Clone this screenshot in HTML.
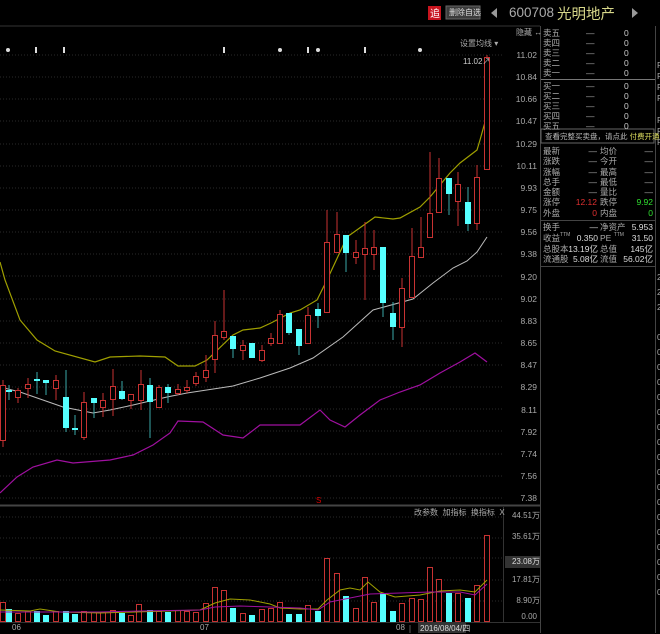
<!DOCTYPE html>
<html><head><meta charset="utf-8"><style>
body{margin:0;width:660px;height:633px;background:#000;overflow:hidden;position:relative;font-family:"Liberation Sans","Noto Sans CJK SC",sans-serif;color:#bbb}
.a{position:absolute;white-space:nowrap}
.p{font-size:8.5px;line-height:10px}
.l{color:#aaa}
sup{font-size:5px;vertical-align:top;line-height:5px}
</style></head><body>
<svg class="a" style="left:0;top:0" width="660" height="633">
<line x1="0" y1="26" x2="540" y2="26" stroke="#333"/>
<line x1="540.5" y1="26" x2="540.5" y2="633" stroke="#444"/>
<line x1="655.5" y1="26" x2="655.5" y2="633" stroke="#444"/>
<line x1="0" y1="505.5" x2="540" y2="505.5" stroke="#444" stroke-width="2"/>
<line x1="0" y1="622.5" x2="540" y2="622.5" stroke="#333"/>
<line x1="503.5" y1="507" x2="503.5" y2="622" stroke="#333"/>
<g stroke="#2a2a2a" stroke-dasharray="1,2">
<line x1="0" y1="55" x2="503" y2="55"/><line x1="0" y1="77" x2="503" y2="77"/><line x1="0" y1="99" x2="503" y2="99"/><line x1="0" y1="121" x2="503" y2="121"/><line x1="0" y1="144" x2="503" y2="144"/><line x1="0" y1="166" x2="503" y2="166"/><line x1="0" y1="188" x2="503" y2="188"/><line x1="0" y1="210" x2="503" y2="210"/><line x1="0" y1="232" x2="503" y2="232"/><line x1="0" y1="254" x2="503" y2="254"/><line x1="0" y1="276" x2="503" y2="276"/><line x1="0" y1="299" x2="503" y2="299"/><line x1="0" y1="321" x2="503" y2="321"/><line x1="0" y1="343" x2="503" y2="343"/><line x1="0" y1="365" x2="503" y2="365"/><line x1="0" y1="387" x2="503" y2="387"/><line x1="0" y1="409" x2="503" y2="409"/><line x1="0" y1="431" x2="503" y2="431"/><line x1="0" y1="454" x2="503" y2="454"/><line x1="0" y1="476" x2="503" y2="476"/><line x1="0" y1="498" x2="503" y2="498"/>
<line x1="0" y1="517" x2="503" y2="517"/><line x1="0" y1="538" x2="503" y2="538"/><line x1="0" y1="558" x2="503" y2="558"/><line x1="0" y1="580" x2="503" y2="580"/><line x1="0" y1="601" x2="503" y2="601"/>
</g>
<polyline fill="none" stroke="#a0a000" stroke-width="1.2" points="0,262 5,280 20,320 37,340 55,351 95,362 110,357 140,356 165,357 178,366 195,366 207,360 233,335 243,330 260,328 271,323 290,313 300,310 317,300 327,280 347,237 375,217 393,219 400,218 420,207 430,197 450,173 460,163 477,150 480,140 487,115"/>
<polyline fill="none" stroke="#bbb" stroke-width="1" points="0,387 20,392 63,407 93,413 110,410 133,405 167,397 187,393 233,386 260,378 290,368 313,358 343,337 373,310 413,299 433,283 453,268 467,261 477,252 487,237"/>
<polyline fill="none" stroke="#a010a0" stroke-width="1.2" points="0,493 17,477 33,467 57,460 73,463 110,460 133,455 153,445 170,433 178,421 203,422 223,435 243,438 260,425 280,425 300,425 320,410 330,420 345,427 360,415 380,400 400,392 420,385 440,373 460,362 475,353 487,362"/>
<g stroke="#c83232" fill="#000">
<line x1="3" y1="380" x2="3" y2="447"/><rect x="0.5" y="385.5" width="5" height="55"/>
<line x1="18" y1="388" x2="18" y2="403"/><rect x="15.5" y="390.5" width="5" height="7"/>
<line x1="28" y1="378" x2="28" y2="398"/><rect x="25.5" y="384.5" width="5" height="4"/>
<line x1="56" y1="375" x2="56" y2="400"/><rect x="53.5" y="380.5" width="5" height="8"/>
<line x1="84" y1="392" x2="84" y2="440"/><rect x="81.5" y="402.5" width="5" height="35"/>
<line x1="103" y1="393" x2="103" y2="417"/><rect x="100.5" y="400.5" width="5" height="7"/>
<line x1="113" y1="369" x2="113" y2="416"/><rect x="110.5" y="386.5" width="5" height="13"/>
<line x1="131" y1="394" x2="131" y2="409"/><rect x="128.5" y="394.5" width="5" height="6"/>
<line x1="141" y1="370" x2="141" y2="410"/><rect x="138.5" y="384.5" width="5" height="16"/>
<line x1="159" y1="385" x2="159" y2="407"/><rect x="156.5" y="387.5" width="5" height="20"/>
<line x1="178" y1="384" x2="178" y2="395"/><rect x="175.5" y="389.5" width="5" height="4"/>
<line x1="187" y1="380" x2="187" y2="393"/><rect x="184.5" y="387.5" width="5" height="3"/>
<line x1="196" y1="372" x2="196" y2="386"/><rect x="193.5" y="376.5" width="5" height="7"/>
<line x1="206" y1="355" x2="206" y2="382"/><rect x="203.5" y="370.5" width="5" height="7"/>
<line x1="215" y1="321" x2="215" y2="373"/><rect x="212.5" y="335.5" width="5" height="24"/>
<line x1="224" y1="290" x2="224" y2="340"/><rect x="221.5" y="331.5" width="5" height="6"/>
<line x1="243" y1="340" x2="243" y2="360"/><rect x="240.5" y="345.5" width="5" height="5"/>
<line x1="262" y1="345" x2="262" y2="362"/><rect x="259.5" y="350.5" width="5" height="10"/>
<line x1="271" y1="333" x2="271" y2="346"/><rect x="268.5" y="338.5" width="5" height="5"/>
<line x1="280" y1="310" x2="280" y2="343"/><rect x="277.5" y="314.5" width="5" height="29"/>
<line x1="308" y1="307" x2="308" y2="343"/><rect x="305.5" y="315.5" width="5" height="28"/>
<line x1="327" y1="210" x2="327" y2="312"/><rect x="324.5" y="242.5" width="5" height="70"/>
<line x1="337" y1="212" x2="337" y2="252"/><rect x="334.5" y="234.5" width="5" height="18"/>
<line x1="356" y1="240" x2="356" y2="264"/><rect x="353.5" y="252.5" width="5" height="5"/>
<line x1="365" y1="222" x2="365" y2="300"/><rect x="362.5" y="248.5" width="5" height="6"/>
<line x1="374" y1="230" x2="374" y2="270"/><rect x="371.5" y="247.5" width="5" height="7"/>
<line x1="402" y1="278" x2="402" y2="347"/><rect x="399.5" y="288.5" width="5" height="39"/>
<line x1="412" y1="228" x2="412" y2="297"/><rect x="409.5" y="256.5" width="5" height="41"/>
<line x1="421" y1="217" x2="421" y2="257"/><rect x="418.5" y="247.5" width="5" height="10"/>
<line x1="430" y1="152" x2="430" y2="237"/><rect x="427.5" y="213.5" width="5" height="24"/>
<line x1="439" y1="158" x2="439" y2="212"/><rect x="436.5" y="178.5" width="5" height="34"/>
<line x1="458" y1="172" x2="458" y2="226"/><rect x="455.5" y="184.5" width="5" height="17"/>
<line x1="477" y1="165" x2="477" y2="230"/><rect x="474.5" y="177.5" width="5" height="46"/>
<line x1="487" y1="55" x2="487" y2="169"/><rect x="484.5" y="57.5" width="5" height="112"/>
</g>
<g stroke="#3aa8a8" fill="#55ffff">
<line x1="9" y1="385" x2="9" y2="400"/><rect x="6" y="390" width="6" height="2" stroke="none"/>
<line x1="37" y1="372" x2="37" y2="394"/><rect x="34" y="379" width="6" height="2" stroke="none"/>
<line x1="46" y1="380" x2="46" y2="395"/><rect x="43" y="380" width="6" height="3" stroke="none"/>
<line x1="66" y1="370" x2="66" y2="432"/><rect x="63" y="397" width="6" height="31" stroke="none"/>
<line x1="75" y1="415" x2="75" y2="435"/><rect x="72" y="428" width="6" height="2" stroke="none"/>
<line x1="94" y1="398" x2="94" y2="418"/><rect x="91" y="398" width="6" height="5" stroke="none"/>
<line x1="122" y1="381" x2="122" y2="400"/><rect x="119" y="391" width="6" height="8" stroke="none"/>
<line x1="150" y1="378" x2="150" y2="438"/><rect x="147" y="385" width="6" height="17" stroke="none"/>
<line x1="168" y1="384" x2="168" y2="403"/><rect x="165" y="387" width="6" height="6" stroke="none"/>
<line x1="233" y1="336" x2="233" y2="358"/><rect x="230" y="336" width="6" height="13" stroke="none"/>
<line x1="252" y1="343" x2="252" y2="358"/><rect x="249" y="343" width="6" height="15" stroke="none"/>
<line x1="289" y1="313" x2="289" y2="335"/><rect x="286" y="313" width="6" height="20" stroke="none"/>
<line x1="299" y1="329" x2="299" y2="355"/><rect x="296" y="329" width="6" height="17" stroke="none"/>
<line x1="318" y1="303" x2="318" y2="328"/><rect x="315" y="309" width="6" height="7" stroke="none"/>
<line x1="346" y1="235" x2="346" y2="272"/><rect x="343" y="235" width="6" height="18" stroke="none"/>
<line x1="383" y1="247" x2="383" y2="317"/><rect x="380" y="247" width="6" height="56" stroke="none"/>
<line x1="393" y1="302" x2="393" y2="340"/><rect x="390" y="313" width="6" height="14" stroke="none"/>
<line x1="449" y1="178" x2="449" y2="215"/><rect x="446" y="178" width="6" height="16" stroke="none"/>
<line x1="468" y1="187" x2="468" y2="231"/><rect x="465" y="202" width="6" height="22" stroke="none"/>
</g>
<g fill="#ddd"><circle cx="8" cy="50" r="2"/><rect x="35" y="47" width="2" height="6"/><rect x="63" y="47" width="2" height="6"/><rect x="223" y="47" width="2" height="6"/><circle cx="280" cy="50" r="2"/><rect x="307" y="47" width="2" height="6"/><circle cx="318" cy="50" r="2"/><rect x="364" y="47" width="2" height="6"/><circle cx="420" cy="50" r="2"/></g>
<g stroke="#c83232" fill="#000">
<rect x="0.5" y="602.5" width="5" height="19"/><rect x="15.5" y="613.5" width="5" height="8"/><rect x="25.5" y="611.5" width="5" height="10"/><rect x="53.5" y="611.5" width="5" height="10"/><rect x="81.5" y="611.5" width="5" height="10"/><rect x="91.5" y="612.5" width="5" height="9"/><rect x="100.5" y="612.5" width="5" height="9"/><rect x="110.5" y="610.5" width="5" height="11"/><rect x="128.5" y="615.5" width="5" height="6"/><rect x="136.5" y="604.5" width="5" height="17"/><rect x="156.5" y="611.5" width="5" height="10"/><rect x="175.5" y="610.5" width="5" height="11"/><rect x="184.5" y="611.5" width="5" height="10"/><rect x="193.5" y="612.5" width="5" height="9"/><rect x="203.5" y="603.5" width="5" height="18"/><rect x="212.5" y="587.5" width="5" height="34"/><rect x="221.5" y="590.5" width="5" height="31"/><rect x="240.5" y="613.5" width="5" height="8"/><rect x="259.5" y="609.5" width="5" height="12"/><rect x="268.5" y="608.5" width="5" height="13"/><rect x="277.5" y="602.5" width="5" height="19"/><rect x="305.5" y="605.5" width="5" height="16"/><rect x="324.5" y="558.5" width="5" height="63"/><rect x="334.5" y="573.5" width="5" height="48"/><rect x="353.5" y="608.5" width="5" height="13"/><rect x="362.5" y="577.5" width="5" height="44"/><rect x="371.5" y="602.5" width="5" height="19"/><rect x="399.5" y="603.5" width="5" height="18"/><rect x="409.5" y="598.5" width="5" height="23"/><rect x="418.5" y="599.5" width="5" height="22"/><rect x="427.5" y="567.5" width="5" height="54"/><rect x="436.5" y="579.5" width="5" height="42"/><rect x="455.5" y="593.5" width="5" height="28"/><rect x="474.5" y="585.5" width="5" height="36"/><rect x="484.5" y="535.5" width="5" height="86"/>
</g>
<g fill="#55ffff">
<rect x="6" y="609" width="6" height="13"/><rect x="34" y="611" width="6" height="11"/><rect x="43" y="615" width="6" height="7"/><rect x="63" y="611" width="6" height="11"/><rect x="72" y="614" width="6" height="8"/><rect x="119" y="613" width="6" height="9"/><rect x="147" y="610" width="6" height="12"/><rect x="165" y="612" width="6" height="10"/><rect x="230" y="608" width="6" height="14"/><rect x="249" y="615" width="6" height="7"/><rect x="286" y="614" width="6" height="8"/><rect x="296" y="614" width="6" height="8"/><rect x="315" y="611" width="6" height="11"/><rect x="343" y="596" width="6" height="26"/><rect x="380" y="593" width="6" height="29"/><rect x="390" y="611" width="6" height="11"/><rect x="446" y="593" width="6" height="29"/><rect x="465" y="598" width="6" height="24"/>
</g>
<polyline fill="none" stroke="#a0a000" points="0,610 30,611 40,609 60,612 100,613 200,610 215,603 230,599 250,600 270,604 280,608 300,609 318,609 327,600 340,590 350,588 360,590 368,582 380,592 395,597 420,595 440,591 460,590 475,592 487,580"/>
<polyline fill="none" stroke="#a010a0" points="0,612 60,612 100,612 140,611 200,610 215,607 240,606 270,607 300,608 318,610 330,602 350,598 370,594 400,593 430,592 460,592 475,595 487,584"/>
<rect x="428" y="6" width="13" height="14" fill="#c8141e"/>
<rect x="446" y="6" width="34" height="13" fill="#3c3c3c" stroke="#666"/>
<path d="M497 8 L491 13 L497 18Z" fill="#999"/><path d="M632 8 L638 13 L632 18Z" fill="#999"/>
<rect x="505" y="556" width="35" height="12" fill="#333"/>
<rect x="418" y="623" width="48" height="10" fill="#333"/>
<rect x="541" y="129" width="113" height="14" fill="none" stroke="#666"/>
<line x1="541" y1="79.5" x2="655" y2="79.5" stroke="#777"/>
<line x1="541" y1="220.5" x2="655" y2="220.5" stroke="#444"/>
<line x1="541" y1="266.5" x2="655" y2="266.5" stroke="#444"/>
<line x1="410" y1="625" x2="410" y2="633" stroke="#555"/>
</svg>
<div class="a" style="left:430px;top:5px;font-size:10px;color:#fff">追</div>
<div class="a" style="left:449px;top:7px;font-size:8px;color:#ddd">删除自选</div>
<div class="a" style="left:509px;top:5px;font-size:13.5px;color:#aaa">600708</div>
<div class="a" style="left:557px;top:3px;font-size:14.5px;color:#d8d88a">光明地产</div>
<div class="a" style="left:516px;top:27px;font-size:8px;color:#aaa">隐藏 ↔</div>
<div class="a" style="left:460px;top:38px;font-size:8px;color:#aaa">设置均线 ▾</div>
<div class="a" style="left:463px;top:56px;font-size:8px;color:#ccc">11.02↗</div>
<div class="a" style="left:316px;top:496px;font-size:8px;color:#d00">S</div>
<div class="a" style="left:500px;top:44px;width:37px;text-align:right;font-size:8.5px;line-height:22.15px;color:#aaa;white-space:normal">11.02<br>10.84<br>10.66<br>10.47<br>10.29<br>10.11<br>9.93<br>9.75<br>9.56<br>9.38<br>9.20<br>9.02<br>8.83<br>8.65<br>8.47<br>8.29<br>8.11<br>7.92<br>7.74<br>7.56<br>7.38</div>
<div class="a" style="left:414px;top:507px;font-size:8px;color:#aaa">改参数 &nbsp;加指标 &nbsp;换指标 &nbsp;X</div>
<div class="a" style="left:505px;top:511px;width:35px;text-align:right;font-size:8px;line-height:10px;color:#aaa">44.51万</div>
<div class="a" style="left:505px;top:532px;width:35px;text-align:right;font-size:8px;line-height:10px;color:#aaa">35.61万</div>
<div class="a" style="left:505px;top:557px;width:35px;text-align:right;font-size:8px;line-height:10px;color:#ddd">23.08万</div>
<div class="a" style="left:505px;top:575px;width:35px;text-align:right;font-size:8px;line-height:10px;color:#aaa">17.81万</div>
<div class="a" style="left:505px;top:596px;width:35px;text-align:right;font-size:8px;line-height:10px;color:#aaa">8.90万</div>
<div class="a" style="left:505px;top:612px;width:32px;text-align:right;font-size:8px;line-height:10px;color:#aaa">0.00</div>
<div class="a" style="left:12px;top:623px;font-size:8px;color:#aaa">06</div>
<div class="a" style="left:200px;top:623px;font-size:8px;color:#aaa">07</div>
<div class="a" style="left:396px;top:623px;font-size:8px;color:#aaa">08</div>
<div class="a" style="left:420px;top:623px;font-size:8px;color:#ddd">2016/08/04/四</div>
<div class="a p l" style="left:543px;top:28px">卖五<br>卖四<br>卖三<br>卖二<br>卖一</div>
<div class="a p l" style="left:586px;top:28px">—<br>—<br>—<br>—<br>—</div>
<div class="a p" style="left:624px;top:28px;color:#ccc">0<br>0<br>0<br>0<br>0</div>
<div class="a p l" style="left:543px;top:81px">买一<br>买二<br>买三<br>买四<br>买五</div>
<div class="a p l" style="left:586px;top:81px">—<br>—<br>—<br>—<br>—</div>
<div class="a p" style="left:624px;top:81px;color:#ccc">0<br>0<br>0<br>0<br>0</div>
<div class="a" style="left:545px;top:131px;font-size:7.5px;color:#bbb">查看完整买卖盘，请点此 <span style="color:#e0e060">付费开通</span></div>
<div class="a p l" style="left:543px;top:146px;line-height:10.3px">最新<br>涨跌<br>涨幅<br>总手<br>金额<br>涨停<br>外盘</div>
<div class="a p l" style="left:568px;top:146px;line-height:10.3px;width:29px;text-align:right">—<br>—<br>—<br>—<br>—<br><span style="color:#e03030">12.12</span><br><span style="color:#e03030">0</span></div>
<div class="a p l" style="left:600px;top:146px;line-height:10.3px">均价<br>今开<br>最高<br>最低<br>量比<br>跌停<br>内盘</div>
<div class="a p l" style="left:628px;top:146px;line-height:10.3px;width:25px;text-align:right">—<br>—<br>—<br>—<br>—<br><span style="color:#30e030">9.92</span><br><span style="color:#30e030">0</span></div>
<div class="a p l" style="left:543px;top:222px;line-height:10.8px">换手<br>收益<sup>TTM</sup><br>总股本<br>流通股</div>
<div class="a p" style="left:567px;top:222px;line-height:10.8px;width:31px;text-align:right;color:#ddd">—<br>0.350<br>13.19亿<br>5.08亿</div>
<div class="a p l" style="left:600px;top:222px;line-height:10.8px">净资产<br>PE <sup>TTM</sup><br>总值<br>流值</div>
<div class="a p" style="left:620px;top:222px;line-height:10.8px;width:33px;text-align:right;color:#ddd">5.953<br>31.50<br>145亿<br>56.02亿</div>
<div class="a p l" style="left:657px;top:60px;line-height:11px">R<br>R<br>R<br>R<br><br>R<br>R<br>R</div>
<div class="a p l" style="left:657px;top:270px;line-height:15px">2<br>2<br>2<br><br>0<br>0<br>0<br>0<br>0<br>0<br>0<br>0<br>0<br>0<br>0<br>0<br>0<br>0<br>0<br>0<br>0<br>0</div>
</body></html>
